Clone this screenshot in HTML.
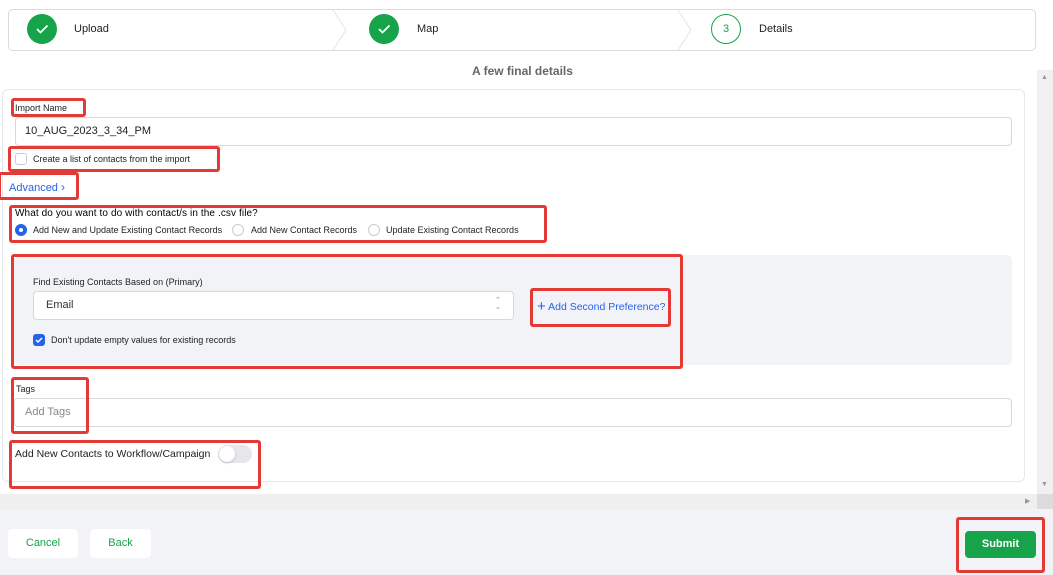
<!DOCTYPE html><html><head><style>
*{box-sizing:border-box;margin:0;padding:0}
body{width:1053px;height:575px;position:relative;overflow:hidden;background:#fff;font-family:"Liberation Sans",sans-serif;color:#222}
.a{position:absolute}
.red{position:absolute;border:3px solid #e53935;border-radius:3px}
.inp{position:absolute;background:#fff;border:1px solid #d6d8de;border-radius:4px}
.t{position:absolute;white-space:nowrap}
</style></head><body>
<div class="a" style="left:8px;top:9px;width:1028px;height:42px;border:1px solid #d9dbe0;border-radius:5px"></div>
<svg class="a" style="left:0;top:9px" width="1053" height="42"><polyline points="333,1 346,21 333,41" fill="none" stroke="#e3e4e8"/><polyline points="678,1 691,21 678,41" fill="none" stroke="#e3e4e8"/>
<circle cx="42" cy="20" r="15" fill="#16a34a"/><path d="M37 20 l3.5 3.5 l7 -7" stroke="#fff" stroke-width="1.8" fill="none"/>
<circle cx="384" cy="20" r="15" fill="#16a34a"/><path d="M379 20 l3.5 3.5 l7 -7" stroke="#fff" stroke-width="1.8" fill="none"/>
<circle cx="726" cy="20" r="14.5" fill="#fff" stroke="#16a34a"/></svg>
<div class="t" style="left:723px;top:23px;font-size:11px;color:#16a34a">3</div>
<div class="t" style="left:74px;top:23px;font-size:11px">Upload</div>
<div class="t" style="left:417px;top:23px;font-size:11px">Map</div>
<div class="t" style="left:759px;top:23px;font-size:11px">Details</div>
<div class="t" style="left:0;width:1045px;text-align:center;top:64px;font-size:12px;font-weight:bold;color:#666">A few final details</div>
<div class="a" style="left:1037px;top:70px;width:16px;height:424px;background:#f0f0f0"></div>
<div class="t" style="left:1041px;top:74px;font-size:7px;color:#999">▲</div>
<div class="t" style="left:1041px;top:481px;font-size:7px;color:#999">▼</div>
<div class="a" style="left:2px;top:89px;width:1023px;height:393px;border:1px solid #e6e7eb;border-radius:6px"></div>
<div class="a" style="left:0;top:494px;width:1037px;height:15px;background:#efefef"></div>
<div class="a" style="left:1037px;top:494px;width:16px;height:15px;background:#dcdcdc"></div>
<div class="t" style="left:1025px;top:497px;font-size:7px;color:#999">▶</div>
<div class="a" style="left:0;top:509px;width:1053px;height:66px;background:#f2f3f7"></div>
<div class="red" style="left:11px;top:98px;width:75px;height:19px"></div>
<div class="t" style="left:15px;top:103px;font-size:9px">Import Name</div>
<div class="inp" style="left:15px;top:117px;width:997px;height:29px"></div>
<div class="t" style="left:25px;top:125px;font-size:11px">10_AUG_2023_3_34_PM</div>
<div class="red" style="left:8px;top:146px;width:212px;height:26px"></div>
<div class="a" style="left:15px;top:153px;width:12px;height:12px;border:1px solid #c9ccd3;border-radius:3px;background:#fff"></div>
<div class="t" style="left:33px;top:154px;font-size:9px">Create a list of contacts from the import</div>
<div class="red" style="left:-2px;top:172px;width:81px;height:28px"></div>
<div class="t" style="left:9px;top:180px;font-size:11px;color:#2563eb">Advanced <span style="font-size:12px">›</span></div>
<div class="red" style="left:9px;top:205px;width:538px;height:38px"></div>
<div class="t" style="left:15px;top:208px;font-size:10px;color:#000;letter-spacing:0.1px">What do you want to do with contact/s in the .csv file?</div>
<div class="a" style="left:15px;top:224px;width:12px;height:12px;border-radius:50%;border:4px solid #2563eb;background:#fff"></div>
<div class="t" style="left:33px;top:225px;font-size:9px">Add New and Update Existing Contact Records</div>
<div class="a" style="left:232px;top:224px;width:12px;height:12px;border-radius:50%;border:1px solid #c9ccd3"></div>
<div class="t" style="left:251px;top:225px;font-size:9px">Add New Contact Records</div>
<div class="a" style="left:368px;top:224px;width:12px;height:12px;border-radius:50%;border:1px solid #c9ccd3"></div>
<div class="t" style="left:386px;top:225px;font-size:9px">Update Existing Contact Records</div>
<div class="a" style="left:14px;top:255px;width:998px;height:110px;background:#f2f3f7;border-radius:6px"></div>
<div class="red" style="left:11px;top:254px;width:672px;height:115px"></div>
<div class="t" style="left:33px;top:277px;font-size:9px">Find Existing Contacts Based on (Primary)</div>
<div class="inp" style="left:33px;top:291px;width:481px;height:29px"></div>
<div class="t" style="left:46px;top:299px;font-size:11px;color:#333">Email</div>
<div class="t" style="left:495px;top:297px;font-size:7px;color:#888;line-height:7px">⌃<br>⌄</div>
<div class="red" style="left:530px;top:288px;width:141px;height:39px"></div>
<div class="t" style="left:537px;top:297px;font-size:10.5px;color:#2563eb"><span style="font-size:15px;position:relative;top:1px">+</span> Add Second Preference?</div>
<div class="a" style="left:33px;top:334px;width:12px;height:12px;border-radius:3px;background:#2563eb"></div>
<svg class="a" style="left:33px;top:334px" width="12" height="12"><path d="M3 6 l2 2 l4 -4" stroke="#fff" stroke-width="1.5" fill="none"/></svg>
<div class="t" style="left:51px;top:335px;font-size:9px">Don't update empty values for existing records</div>
<div class="inp" style="left:14px;top:398px;width:998px;height:29px"></div>
<div class="red" style="left:11px;top:377px;width:78px;height:57px;background:transparent"></div>
<div class="t" style="left:16px;top:384px;font-size:9px">Tags</div>
<div class="t" style="left:25px;top:406px;font-size:11px;color:#888">Add Tags</div>
<div class="red" style="left:9px;top:440px;width:252px;height:49px"></div>
<div class="t" style="left:15px;top:448px;font-size:10.5px">Add New Contacts to Workflow/Campaign</div>
<div class="a" style="left:218px;top:445px;width:34px;height:18px;border-radius:9px;background:#e6e7eb"></div>
<div class="a" style="left:219px;top:446px;width:16px;height:16px;border-radius:50%;background:#fff;box-shadow:0 1px 2px rgba(0,0,0,.2)"></div>
<div class="a" style="left:8px;top:529px;width:70px;height:29px;background:#fff;border-radius:4px;color:#16a34a;font-size:11px;text-align:center;line-height:29px">Cancel</div>
<div class="a" style="left:90px;top:529px;width:61px;height:29px;background:#fff;border-radius:4px;color:#16a34a;font-size:11px;text-align:center;line-height:29px">Back</div>
<div class="red" style="left:956px;top:517px;width:89px;height:56px"></div>
<div class="a" style="left:965px;top:531px;width:71px;height:27px;background:#16a34a;border-radius:4px;color:#fff;font-size:11px;font-weight:bold;text-align:center;line-height:27px">Submit</div>
</body></html>
